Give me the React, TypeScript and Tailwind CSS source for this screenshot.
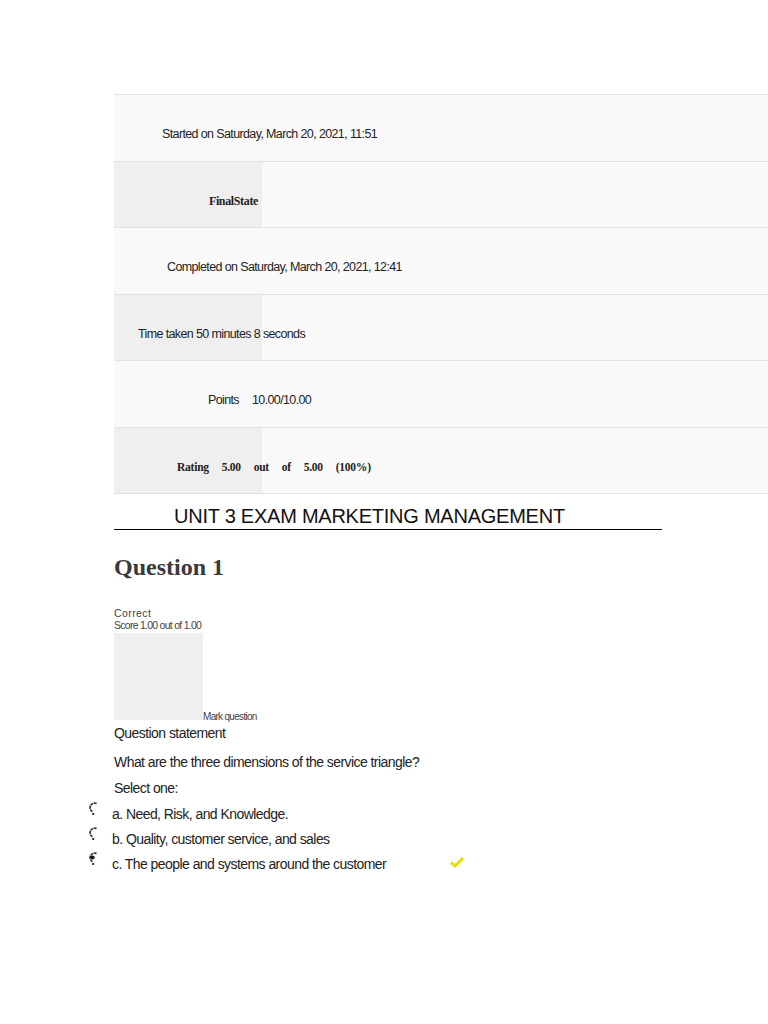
import React from 'react';

const sans = "font-['Liberation_Sans',Arial,sans-serif]";
const serif = "font-['Liberation_Serif','Times_New_Roman',serif]";

function Row({ header, pl, children }: { header?: boolean; pl: string; children: React.ReactNode }) {
  return (
    <div
      className={`h-[66.5px] border-t-[1.5px] border-[#e2e2e2] flex items-center pt-[14px] ${pl} ${
        header ? 'bg-[linear-gradient(to_right,#efefef_148px,#f9f9f9_148px)]' : 'bg-[#f9f9f9]'
      }`}
    >
      {children}
    </div>
  );
}

function Radio({ checked }: { checked?: boolean }) {
  return (
    <svg width="13" height="15" viewBox="0 0 13 15" className="shrink-0">
      <path d="M9.6 2.6 A4.5 4.5 0 1 0 5.6 10.8" fill="none" stroke="#333" strokeWidth="1.7" strokeDasharray="3 0.6" />
      <rect x="5.2" y="12" width="2" height="2" fill="#333" />
      {checked && <circle cx="5.6" cy="6.4" r="2" fill="#111" />}
    </svg>
  );
}

export default function App() {
  return (
    <div className={`min-h-[1024px] bg-white text-[#333] ${sans}`}>
      <div className="pt-[94px] pl-[114px]">
        <div className="border-b-[1.5px] border-[#e2e2e2]">
          <Row pl="pl-[48px]">
            <span className="text-[12.5px] tracking-[-0.05em] text-[#222]">Started on Saturday, March 20, 2021, 11:51</span>
          </Row>
          <Row header pl="pl-0">
            <span className={`${serif} font-bold text-[12px] tracking-[-0.03em] w-[144px] text-right text-[#222]`}>FinalState</span>
          </Row>
          <Row pl="pl-[53px]">
            <span className="text-[12.5px] tracking-[-0.05em] text-[#222]">Completed on Saturday, March 20, 2021, 12:41</span>
          </Row>
          <Row header pl="pl-[24px]">
            <span className="text-[12.5px] tracking-[-0.05em] text-[#222]">Time taken 50 minutes 8 seconds</span>
          </Row>
          <Row pl="pl-[94px]">
            <span className="text-[12.5px] tracking-[-0.05em] text-[#222] flex gap-[13px]">
              <span>Points</span>
              <span>10.00/10.00</span>
            </span>
          </Row>
          <Row header pl="pl-[63px]">
            <span className={`${serif} font-bold text-[11.5px] tracking-[-0.02em] text-[#222] flex gap-[12.8px]`}>
              <span>Rating</span>
              <span>5.00</span>
              <span>out</span>
              <span>of</span>
              <span>5.00</span>
              <span>(100%)</span>
            </span>
          </Row>
        </div>

        <div className="w-[548px] border-b border-black pl-[60px] pt-[10px] pb-[1px]">
          <h1 className="text-[20px] leading-[24px] tracking-[-0.012em] text-[#111]">UNIT 3 EXAM MARKETING MANAGEMENT</h1>
        </div>

        <h2 className={`${serif} font-bold text-[24px] leading-[28px] text-[#3a3a3a] mt-[23px]`}>Question 1</h2>

        <div className="mt-[26px] text-[10.5px] leading-[12px] text-[#444]">
          <div className="tracking-[0.04em]">Correct</div>
          <div className="tracking-[-0.07em]">Score 1.00 out of 1.00</div>
        </div>
        <div className="flex items-end mt-[2px]">
          <div className="w-[89px] h-[87px] bg-[#efefef]" />
          <span className="text-[10px] leading-[10px] tracking-[-0.07em] text-[#444] mb-[-2px]">Mark question</span>
        </div>

        <div className="text-[14px] tracking-[-0.04em] text-[#222]">
          <div className="mt-[4px] leading-[18px]">Question statement</div>
          <div className="mt-[11px] leading-[18px]">What are the three dimensions of the service triangle?</div>
          <div className="mt-[8px] leading-[18px]">Select one:</div>
        </div>

        <div className="ml-[-27px] mt-[4px] text-[14px] tracking-[-0.04em] text-[#222]">
          <div className="flex items-start gap-[12px] h-[25px]">
            <Radio />
            <span className="mt-[3px]">a. Need, Risk, and Knowledge.</span>
          </div>
          <div className="flex items-start gap-[12px] h-[25px]">
            <Radio />
            <span className="mt-[3px]">b. Quality, customer service, and sales</span>
          </div>
          <div className="flex items-start gap-[12px] h-[25px]">
            <Radio checked />
            <span className="mt-[3px]">c. The people and systems around the customer</span>
            <svg width="16" height="12" viewBox="0 0 16 12" className="ml-[51px] mt-[5px]">
              <path d="M2 6.5 L6 10 L14 2" fill="none" stroke="#e8e000" strokeWidth="3" />
            </svg>
          </div>
        </div>
      </div>
    </div>
  );
}
